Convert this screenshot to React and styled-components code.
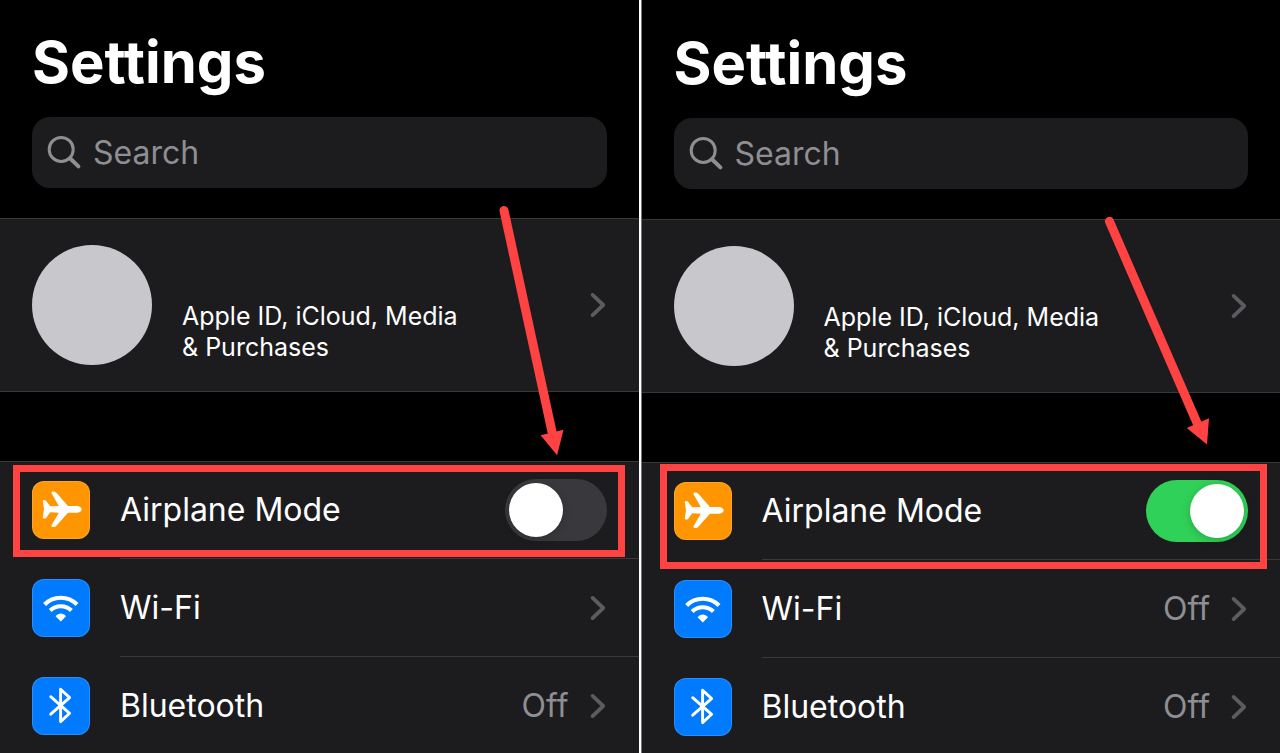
import React, { useId, useState } from "react";
import styled, { createGlobalStyle } from "styled-components";

const GlobalStyle = createGlobalStyle`
  *, *::before, *::after { box-sizing: border-box; }
  body {
    margin: 0;
    background: #000;
    color: #fff;
    font-family: Inter, "Liberation Sans", sans-serif;
  }
`;

const Page = styled.main`
  display: grid;
  grid-template-columns: 1fr 3px 1fr;
  height: 100vh;
  overflow: hidden;
`;

const Divider = styled.div`
  background: #fff;
  border-right: 1px solid #777;
`;

const Pane = styled.section`
  min-width: 0;
  padding-top: ${(p) => p.$top}px;
`;

const Title = styled.h1`
  margin: 0;
  padding: 26px 32px 19px;
  font-size: 58px;
  line-height: 72px;
  font-weight: 700;
`;

const SearchBox = styled.label`
  display: flex;
  align-items: center;
  gap: 11px;
  height: 71px;
  margin: 0 32px 30px;
  padding: 0 14px;
  border-radius: 18px;
  background: #1c1c1e;
`;

const SearchInput = styled.input`
  flex: 1;
  min-width: 0;
  padding: 0;
  border: 0;
  outline: 0;
  background: none;
  color: #fff;
  font: inherit;
  font-size: 32px;
  line-height: 40px;
  &::placeholder { color: #8e8e93; opacity: 1; }
`;

const ProfileCard = styled.a`
  display: flex;
  align-items: center;
  gap: 30px;
  margin-bottom: 69px;
  padding: 26px 32px;
  border: solid #39393b;
  border-width: 1px 0;
  background: #1c1c1e;
  color: inherit;
  text-decoration: none;
`;

const Avatar = styled.span`
  flex: none;
  width: 120px;
  height: 120px;
  border-radius: 50%;
  background: #c7c7cc;
`;

const ProfileText = styled.span`
  flex: 1;
  align-self: flex-end;
  padding-bottom: 2px;
  font-size: 25px;
  line-height: 31px;
`;

const ProfileLine = styled.span`
  display: block;
`;

const List = styled.div`
  background: #1c1c1e;
  box-shadow: inset 0 1px #39393b;
`;

const Row = styled.div`
  position: relative;
  display: flex;
  align-items: center;
  gap: 30px;
  height: 98px;
  padding-left: 32px;
  color: inherit;
  text-decoration: none;
`;

const Tile = styled.span`
  flex: none;
  display: grid;
  place-items: center;
  width: 58px;
  height: 58px;
  border-radius: 12px;
  background: ${(p) => p.$color};
  box-shadow: inset 0 0 0 1px rgba(255, 255, 255, 0.16);
`;

const RowBody = styled.span`
  flex: 1;
  align-self: stretch;
  display: flex;
  align-items: center;
  padding-right: 32px;
  box-shadow: inset 0 -1px #39393b;
  font-size: 32px;
  line-height: 40px;
`;

const RowLabel = styled.label`
  flex: 1;
`;

const RowValue = styled.span`
  margin-right: 20px;
  color: #8e8e93;
`;

const Switch = styled.input`
  appearance: none;
  display: flex;
  width: 102px;
  height: 62px;
  margin: 0;
  padding: 4px;
  border-radius: 31px;
  background: #39393d;
  &::before {
    content: "";
    width: 54px;
    height: 54px;
    border-radius: 50%;
    background: #fff;
    box-shadow: 0 2px 8px rgba(0, 0, 0, 0.2);
  }
  &:checked { background: #30d158; justify-content: flex-end; }
`;

const Highlight = styled.span`
  position: absolute;
  z-index: 1;
  inset: ${(p) => p.$inset};
  border: 7px solid #ff4242;
  pointer-events: none;
`;

const Arrow = styled.svg`
  position: absolute;
  z-index: 1;
  right: ${(p) => p.$right}px;
  bottom: 100%;
  overflow: visible;
  pointer-events: none;
`;

const Chevron = () => (
  <svg width="18" height="26" viewBox="0 0 18 26" fill="none" stroke="#5b5b60" strokeWidth="3.8" strokeLinecap="round" strokeLinejoin="round" aria-hidden="true">
    <path d="M3.6 2.9 14.2 13 3.6 23.1" />
  </svg>
);

const SearchIcon = () => (
  <svg width="36" height="36" viewBox="0 0 36 36" fill="none" stroke="#8e8e93" aria-hidden="true">
    <circle cx="15.2" cy="14.4" r="12" strokeWidth="3" />
    <path d="M24 23.2 32.4 31.4" strokeWidth="4" strokeLinecap="round" />
  </svg>
);

const PlaneIcon = () => (
  <svg width="58" height="58" viewBox="0 0 58 58" fill="#fff" aria-hidden="true">
    <path d="M10.8 20.3C10.8 18.8 13.2 18.6 14.2 19.9L18.2 25.3 26.8 24.9 19.7 12.6C19 11.1 19.8 10.4 21.4 10.4 22.8 10.4 23.7 10.9 24.6 12L36 24.9H45C47.4 24.9 49.7 26.5 49.7 28.3 49.7 30.2 47.4 31.8 45 31.8H36L24.6 44.5C23.7 45.6 22.8 46.1 21.4 46.1 19.8 46.1 19 45.4 19.7 43.9L26.8 31.7 18.2 31.3 14.2 36.7C13.2 38 10.8 37.8 10.8 36.3L12 28.3Z" />
  </svg>
);

const WifiIcon = () => (
  <svg width="58" height="58" viewBox="0 0 58 58" fill="none" stroke="#fff" strokeWidth="4.2" aria-hidden="true">
    <path d="M12.6 25.4C21.4 16.5 36.1 16.5 45 25.4" />
    <path d="M18.2 31.5C24 25.8 33.6 25.8 39.4 31.5" />
    <path d="M28.8 42.4 23.6 37.2C26.4 33.7 31.2 33.7 34 37.2Z" fill="#fff" stroke="none" />
  </svg>
);

const BluetoothIcon = () => (
  <svg width="58" height="58" viewBox="0 0 58 58" fill="none" stroke="#fff" strokeWidth="2.9" strokeLinecap="round" strokeLinejoin="round" aria-hidden="true">
    <path d="M18.7 19.7 37.6 36.3 28.6 44.6V12.3L37.6 20.6 18.7 37.2" />
  </svg>
);

function SearchField() {
  return (
    <SearchBox>
      <SearchIcon />
      <SearchInput type="text" placeholder="Search" aria-label="Search" />
    </SearchBox>
  );
}

function LinkRow({ icon, label, value }) {
  return (
    <Row as="a" href="#">
      <Tile $color="#007aff">{icon}</Tile>
      <RowBody>
        <RowLabel as="span">{label}</RowLabel>
        {value && <RowValue>{value}</RowValue>}
        <Chevron />
      </RowBody>
    </Row>
  );
}

function AirplaneRow({ initial, children }) {
  const id = useId();
  const [on, setOn] = useState(initial);
  return (
    <Row>
      <Tile $color="#ff9500"><PlaneIcon /></Tile>
      <RowBody>
        <RowLabel htmlFor={id}>Airplane Mode</RowLabel>
        <Switch id={id} type="checkbox" checked={on} onChange={(e) => setOn(e.target.checked)} />
      </RowBody>
      {children}
    </Row>
  );
}

function SettingsPane({ top, airplane, wifi, bluetooth, annotation }) {
  return (
    <Pane $top={top}>
      <Title>Settings</Title>
      <SearchField />
      <ProfileCard href="#">
        <Avatar />
        <ProfileText>
          <ProfileLine>Apple ID, iCloud, Media</ProfileLine>
          <ProfileLine>&amp; Purchases</ProfileLine>
        </ProfileText>
        <Chevron />
      </ProfileCard>
      <List>
        <AirplaneRow initial={airplane}>{annotation}</AirplaneRow>
        <LinkRow icon={<WifiIcon />} label="Wi-Fi" value={wifi} />
        <LinkRow icon={<BluetoothIcon />} label="Bluetooth" value={bluetooth} />
      </List>
    </Pane>
  );
}

const LeftAnnotation = (
  <>
    <Highlight $inset="4px 14px 2px 13px" />
    <Arrow $right={69} width="80" height="261" viewBox="490 200 80 261" aria-hidden="true">
      <path d="M504 210.5 552.5 434" stroke="#ff4242" strokeWidth="9" strokeLinecap="round" />
      <path d="M540.6 435.3 563.5 429.8 557.1 455.2Z" fill="#ff4242" />
    </Arrow>
  </>
);

const RightAnnotation = (
  <>
    <Highlight $inset="2px 13px -9px 18px" />
    <Arrow $right={60} width="130" height="262" viewBox="1090 200 130 262" aria-hidden="true">
      <path d="M1109.4 221.3 1197.5 424" stroke="#ff4242" strokeWidth="9" strokeLinecap="round" />
      <path d="M1186.8 428 1209 418.2 1207 444.4Z" fill="#ff4242" />
    </Arrow>
  </>
);

export default function App() {
  return (
    <>
      <GlobalStyle />
      <Page>
        <SettingsPane top={0} airplane={false} bluetooth="Off" annotation={LeftAnnotation} />
        <Divider />
        <SettingsPane top={1} airplane wifi="Off" bluetooth="Off" annotation={RightAnnotation} />
      </Page>
    </>
  );
}
